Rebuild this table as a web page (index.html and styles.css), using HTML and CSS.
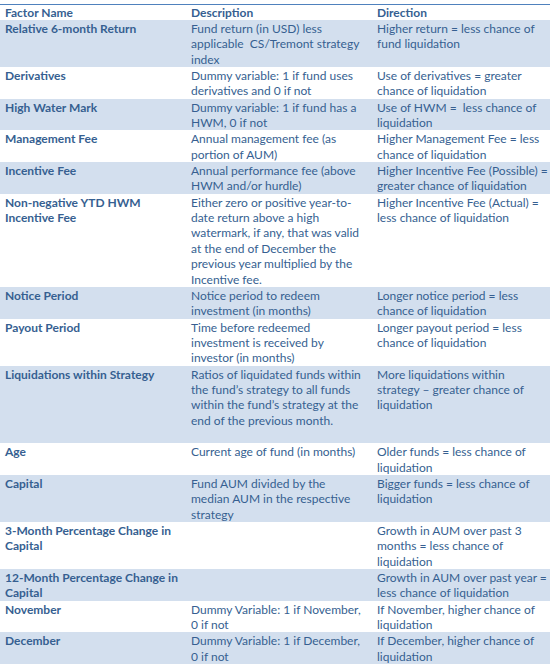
FILE: index.html
```html
<!DOCTYPE html>
<html>
<head>
<meta charset="utf-8">
<link rel="stylesheet" href="styles.css">
</head>
<body>
<table class="factors">
  <colgroup><col class="c1"><col class="c2"><col class="c3"></colgroup>
  <thead>
    <tr><th>Factor Name</th><th>Description</th><th>Direction</th></tr>
  </thead>
  <tbody>
    <tr class="shade"><td class="name">Relative 6-month Return</td><td>Fund return (in USD) less<br>applicable&nbsp; CS/Tremont strategy<br>index</td><td>Higher return = less chance of<br>fund liquidation</td></tr>
    <tr><td class="name">Derivatives</td><td>Dummy variable: 1 if fund uses<br>derivatives and 0 if not</td><td>Use of derivatives = greater<br>chance of liquidation</td></tr>
    <tr class="shade"><td class="name">High Water Mark</td><td>Dummy variable: 1 if fund has a<br>HWM, 0 if not</td><td>Use of HWM = &nbsp;less chance of<br>liquidation</td></tr>
    <tr><td class="name">Management Fee</td><td>Annual management fee (as<br>portion of AUM)</td><td>Higher Management Fee = less<br>chance of liquidation</td></tr>
    <tr class="shade"><td class="name">Incentive Fee</td><td>Annual performance fee (above<br>HWM and/or hurdle)</td><td>Higher Incentive Fee (Possible) =<br>greater chance of liquidation</td></tr>
    <tr><td class="name">Non-negative YTD HWM<br>Incentive Fee</td><td>Either zero or positive year-to-<br>date return above a high<br>watermark, if any, that was valid<br>at the end of December the<br>previous year multiplied by the<br>Incentive fee.</td><td>Higher Incentive Fee (Actual) =<br>less chance of liquidation</td></tr>
    <tr class="shade"><td class="name">Notice Period</td><td>Notice period to redeem<br>investment (in months)</td><td>Longer notice period = less<br>chance of liquidation</td></tr>
    <tr><td class="name">Payout Period</td><td>Time before redeemed<br>investment is received by<br>investor (in months)</td><td>Longer payout period = less<br>chance of liquidation</td></tr>
    <tr class="shade"><td class="name">Liquidations within Strategy</td><td>Ratios of liquidated funds within<br>the fund’s strategy to all funds<br>within the fund’s strategy at the<br>end of the previous month.<br>&nbsp;</td><td>More liquidations within<br>strategy – greater chance of<br>liquidation</td></tr>
    <tr><td class="name">Age</td><td>Current age of fund (in months)</td><td>Older funds = less chance of<br>liquidation</td></tr>
    <tr class="shade"><td class="name">Capital</td><td>Fund AUM divided by the<br>median AUM in the respective<br>strategy</td><td>Bigger funds = less chance of<br>liquidation</td></tr>
    <tr><td class="name">3-Month Percentage Change in<br>Capital</td><td></td><td>Growth in AUM over past 3<br>months = less chance of<br>liquidation</td></tr>
    <tr class="shade"><td class="name">12-Month Percentage Change in<br>Capital</td><td></td><td>Growth in AUM over past year =<br>less chance of liquidation</td></tr>
    <tr><td class="name">November</td><td>Dummy Variable: 1 if November,<br>0 if not</td><td>If November, higher chance of<br>liquidation</td></tr>
    <tr class="shade"><td class="name">December</td><td>Dummy Variable: 1 if December,<br>0 if not</td><td>If December, higher chance of<br>liquidation</td></tr>
  </tbody>
</table>
</body>
</html>
```
FILE: styles.css
```css
html, body {
  margin: 0;
  padding: 0;
  background: #ffffff;
}
body {
  padding-top: 4px;
  font-family: "Lato", "Liberation Sans", sans-serif;
  font-size: 12px;
  color: #365f91;
}
.factors {
  border-collapse: collapse;
  table-layout: fixed;
  width: 550px;
  border-top: 1px solid #4f81bd;
}
.c1, .c2 { width: 186px; }
.c3 { width: 178px; }
.factors th, .factors td {
  text-align: left;
  vertical-align: top;
  padding: 1px 0 0 5px;
  line-height: 15.35px;
  white-space: nowrap;
  overflow: hidden;
}
.factors th {
  font-weight: bold;
  height: 14px;
  line-height: 14px;
}
.factors td.name { font-weight: bold; }
.factors tr.shade td { background: #d3dfee; }
```
